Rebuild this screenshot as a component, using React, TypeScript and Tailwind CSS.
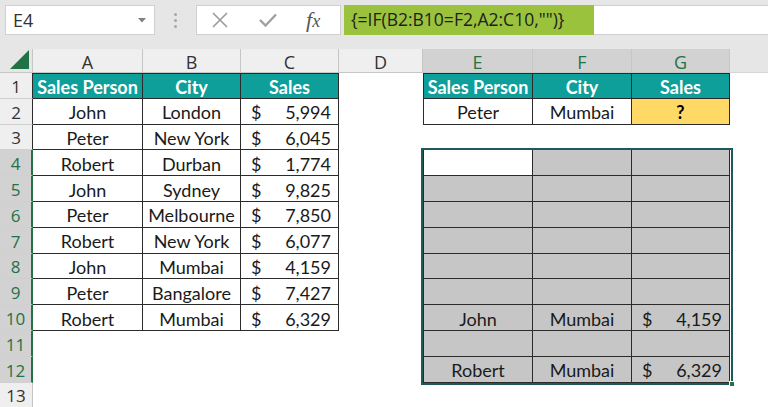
import React from "react";

type Kind = "blank" | "head" | "data" | "sel" | "active" | "yellow";
type C = { kind: Kind; text?: string; money?: string; bt?: boolean; bl?: boolean; border?: boolean };

const colLetters = ["A", "B", "C", "D", "E", "F", "G"];

const left: string[][] = [
  ["John", "London", "5,994"],
  ["Peter", "New York", "6,045"],
  ["Robert", "Durban", "1,774"],
  ["John", "Sydney", "9,825"],
  ["Peter", "Melbourne", "7,850"],
  ["Robert", "New York", "6,077"],
  ["John", "Mumbai", "4,159"],
  ["Peter", "Bangalore", "7,427"],
  ["Robert", "Mumbai", "6,329"],
];

function buildRow(r: number): C[] {
  const cells: C[] = [];
  // A-C
  for (let c = 0; c < 3; c++) {
    if (r === 1) {
      cells.push({ kind: "head", text: ["Sales Person", "City", "Sales"][c], bt: true, border: true });
    } else if (r <= 10) {
      const row = left[r - 2];
      cells.push(c === 2 ? { kind: "data", money: row[2], border: true } : { kind: "data", text: row[c], border: true });
    } else cells.push({ kind: "blank" });
  }
  // D
  cells.push({ kind: "blank" });
  // E-G
  for (let c = 0; c < 3; c++) {
    const bl = c === 0;
    if (r === 1) cells.push({ kind: "head", text: ["Sales Person", "City", "Sales"][c], bt: true, bl, border: true });
    else if (r === 2) {
      if (c === 2) cells.push({ kind: "yellow", text: "?", bl, border: true });
      else cells.push({ kind: "data", text: ["Peter", "Mumbai"][c], bl, border: true });
    } else if (r === 3 || r === 13) cells.push({ kind: "blank" });
    else {
      const kind: Kind = r === 4 && c === 0 ? "active" : "sel";
      let text: string | undefined;
      let money: string | undefined;
      if (r === 10) {
        if (c === 2) money = "4,159";
        else text = ["John", "Mumbai"][c];
      }
      if (r === 12) {
        if (c === 2) money = "6,329";
        else text = ["Robert", "Mumbai"][c];
      }
      cells.push({ kind, text, money, bl, border: true });
    }
  }
  return cells;
}

function Cell({ c }: { c: C }) {
  const bg =
    c.kind === "head"
      ? "bg-[#0f9f9a] text-white font-bold"
      : c.kind === "sel"
      ? "bg-[#c6c6c6] text-[#1a1a1a]"
      : c.kind === "yellow"
      ? "bg-[#ffd966] text-black font-bold"
      : "bg-white text-[#1a1a1a]";
  const borders = c.border
    ? `border-r border-b border-[#2b2b2b] ${c.bt ? "border-t" : ""} ${c.bl ? "border-l" : ""}`
    : "";
  if (c.money) {
    return (
      <div className={`${bg} ${borders} flex items-center justify-between pt-[2px] pl-[10px] pr-[7px] overflow-hidden whitespace-nowrap`}>
        <span>$</span>
        <span>{c.money}</span>
      </div>
    );
  }
  return (
    <div className={`${bg} ${borders} flex items-center justify-center pt-[2px] overflow-hidden whitespace-nowrap`}>
      {c.text ?? ""}
    </div>
  );
}

export default function App() {
  const rows = Array.from({ length: 13 }, (_, i) => i + 1);
  return (
    <div className="w-[768px] h-[407px] overflow-hidden bg-white font-['Lato',sans-serif] text-[18px] leading-none">
      {/* Formula bar */}
      <div className="h-[49px] bg-[#e6e6e6] flex items-start pt-[5px]">
        <div className="ml-[5px] w-[150px] h-[30px] bg-white border border-[#d0d0d0] flex items-center pl-[7px] pr-[8px] font-['Open_Sans',sans-serif] text-[18px] text-[#333]">
          <span className="flex-1">E4</span>
          <svg width="8" height="5" viewBox="0 0 8 5"><path d="M0 0 L8 0 L4 4.5 Z" fill="#808080" /></svg>
        </div>
        <div className="w-[41px] h-[30px] flex flex-col items-center justify-center gap-[3px]">
          <div className="w-[3px] h-[3px] rounded-full bg-[#a8a8a8]" />
          <div className="w-[3px] h-[3px] rounded-full bg-[#a8a8a8]" />
          <div className="w-[3px] h-[3px] rounded-full bg-[#a8a8a8]" />
        </div>
        <div className="w-[145px] h-[30px] bg-white border border-[#d0d0d0] flex items-center">
          <svg className="ml-[14px]" width="18" height="16" viewBox="0 0 18 16">
            <path d="M2 1 L16 15 M16 1 L2 15" stroke="#9a9a9a" strokeWidth="1.6" fill="none" />
          </svg>
          <svg className="ml-[30px]" width="18" height="14" viewBox="0 0 18 14">
            <path d="M1 7 L6.5 12.5 L17 1.5" stroke="#a0a0a0" strokeWidth="2.4" fill="none" />
          </svg>
          <span className="ml-[29px] font-['Liberation_Serif',serif] italic text-[22px] text-[#555]">
            f<span className="text-[18px]">x</span>
          </span>
        </div>
        <div className="ml-[3px] w-[250px] h-[30px] bg-[#9ac23c] flex items-center pl-[7px] font-['Open_Sans',sans-serif] text-[17.5px] text-[#1e1e1e]">
          {'{=IF(B2:B10=F2,A2:C10,"")}'}
        </div>
        <div className="flex-1 h-[30px] bg-white border-y border-[#d0d0d0]" />
      </div>

      {/* Sheet */}
      <div className="relative">
        <div className="grid grid-cols-[33px_110px_98px_98px_84px_110px_99px_98px_1fr] grid-rows-[24px_repeat(13,25.8px)]">
          {/* corner */}
          <div className="bg-[#e6e6e6] border-r border-b border-[#c6c6c6] flex items-end justify-end pr-[3px] pb-[3px]">
            <svg width="19" height="19" viewBox="0 0 19 19"><path d="M19 0 L19 19 L0 19 Z" fill="#217346" /></svg>
          </div>
          {colLetters.map((l, i) => (
            <div
              key={l}
              className={`${i >= 4 ? "bg-[#d2d2d2] text-[#217346]" : "bg-[#efefef] text-[#333]"} border-r border-b border-[#c6c6c6] flex items-center justify-center pt-[2px] font-['Open_Sans',sans-serif] text-[18px]`}
            >
              {l}
            </div>
          ))}
          <div className="bg-[#e6e6e6] border-b border-[#d6d6d6]" />

          {rows.map((r) => {
            const selected = r >= 4 && r <= 12;
            return (
              <React.Fragment key={r}>
                <div
                  className={`${
                    selected
                      ? "bg-[#d2d2d2] text-[#217346] border-r-2 border-r-[#217346]"
                      : r <= 3
                      ? "bg-[#efefef] text-[#333] border-r border-r-[#2b2b2b]"
                      : "bg-[#efefef] text-[#333] border-r border-r-[#c6c6c6]"
                  } border-b border-b-[#d0d0d0] flex items-center justify-center pt-[2px] font-['Open_Sans',sans-serif] text-[17px]`}
                >
                  {r}
                </div>
                {buildRow(r).map((c, i) => (
                  <Cell key={i} c={c} />
                ))}
                <div className="bg-white" />
              </React.Fragment>
            );
          })}
        </div>

        {/* selection outline */}
        <div className="absolute left-[421px] top-[99px] w-[312px] h-[237px] border-2 border-[#1e5a5b] pointer-events-none">
          <div className="absolute -right-[4px] -bottom-[4px] w-[6px] h-[6px] bg-[#217346] border border-white" />
        </div>
      </div>
    </div>
  );
}
